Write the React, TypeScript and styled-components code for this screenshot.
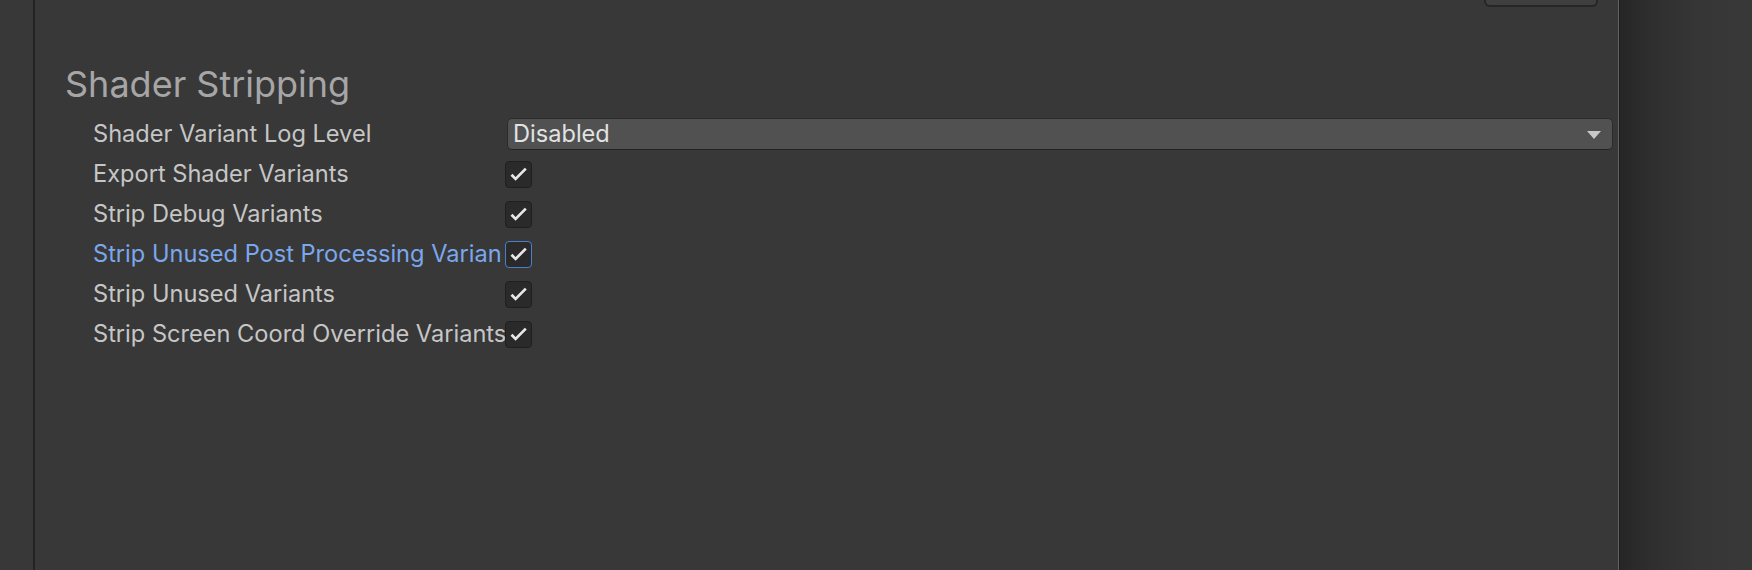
import styled, { createGlobalStyle } from "styled-components";

const GlobalStyle = createGlobalStyle`
  html, body {
    margin: 0;
    padding: 0;
    background: #383838;
  }
  body {
    font-family: Inter, "Noto Sans", "Liberation Sans", sans-serif;
  }
`;

type Setting = {
  label: string;
  checked: boolean;
  focused?: boolean;
};

const toggles: Setting[] = [
  { label: "Export Shader Variants", checked: true },
  { label: "Strip Debug Variants", checked: true },
  { label: "Strip Unused Post Processing Varian", checked: true, focused: true },
  { label: "Strip Unused Variants", checked: true },
  { label: "Strip Screen Coord Override Variants", checked: true },
];

const Page = styled.div`
  display: flex;
  width: 1752px;
  height: 570px;
  overflow: hidden;
  background: #383838;
`;

const Gutter = styled.div`
  width: 33px;
  background: #383838;
`;

const GutterLine = styled.div`
  width: 2px;
  background: #232323;
`;

const Panel = styled.div`
  flex: 1;
  display: flex;
  flex-direction: column;
  background: #383838;
`;

const TopBar = styled.div`
  display: flex;
  justify-content: flex-end;
  height: 7px;
  padding-right: 20px;
`;

const CutButton = styled.div`
  width: 110px;
  height: 5px;
  background: #3f3f3f;
  border: 2px solid #262626;
  border-top: none;
  border-radius: 0 0 6px 6px;
`;

const Section = styled.section`
  display: flex;
  flex-direction: column;
  padding: 55px 5px 0 30px;
`;

const Heading = styled.h2`
  margin: 0 0 8px;
  font-size: 36px;
  line-height: 44px;
  font-weight: 400;
  color: #a6a6a6;
`;

const Rows = styled.div`
  display: flex;
  flex-direction: column;
  padding-left: 28px;
`;

const Row = styled.div`
  display: flex;
  align-items: center;
  height: 40px;
`;

const Label = styled.div<{ $focused?: boolean }>`
  width: 412px;
  flex-shrink: 0;
  font-size: 23.6px;
  line-height: 40px;
  white-space: nowrap;
  color: ${(p) => (p.$focused ? "#7ba7ec" : "#c6c6c6")};
`;

const Dropdown = styled.div`
  flex: 1;
  margin-left: 2px;
  height: 32px;
  display: flex;
  align-items: center;
  justify-content: space-between;
  padding: 0 11px 2px 5px;
  box-sizing: border-box;
  background: #515151;
  border: 1px solid #2b2b2b;
  border-bottom-color: #232323;
  border-radius: 5px;
  font-size: 23.6px;
  color: #e2e2e2;
`;

const Arrow = styled.svg`
  width: 14px;
  height: 8px;
  margin-top: 3px;
`;

const Box = styled.div<{ $focused?: boolean }>`
  width: 25px;
  height: 25px;
  flex-shrink: 0;
  display: flex;
  align-items: center;
  justify-content: center;
  background: #2a2a2a;
  border: 1px solid ${(p) => (p.$focused ? "#4a80c9" : "#1f1f1f")};
  border-radius: 4px;
`;

const PanelEdge = styled.div`
  width: 0;
  border-left: 1px solid #626262;
  border-right: 1px solid #1e1e1e;
`;

const Shade = styled.div`
  width: 132px;
  background: linear-gradient(to right, #262626 0%, #2f2f2f 25%, #363636 60%, #383838 100%);
`;

const Check = () => (
  <svg width="25" height="25" viewBox="0 0 25 25">
    <polyline
      points="5.5,12.8 9.6,16.9 19.8,6.6"
      fill="none"
      stroke="#e8e8e8"
      strokeWidth="2.7"
      strokeLinejoin="miter"
    />
  </svg>
);

const CheckBox = ({ checked, focused }: { checked: boolean; focused?: boolean }) => (
  <Box $focused={focused}>{checked && <Check />}</Box>
);

export default function App() {
  return (
    <>
      <GlobalStyle />
      <Page>
        <Gutter />
        <GutterLine />
        <Panel>
          <TopBar>
            <CutButton />
          </TopBar>
          <Section>
            <Heading>Shader Stripping</Heading>
            <Rows>
              <Row>
                <Label>Shader Variant Log Level</Label>
                <Dropdown>
                  <span>Disabled</span>
                  <Arrow viewBox="0 0 14 8">
                    <polygon points="0,0 14,0 7,8" fill="#c8c8c8" />
                  </Arrow>
                </Dropdown>
              </Row>
              {toggles.map((t) => (
                <Row key={t.label}>
                  <Label $focused={t.focused}>{t.label}</Label>
                  <CheckBox checked={t.checked} focused={t.focused} />
                </Row>
              ))}
            </Rows>
          </Section>
        </Panel>
        <PanelEdge />
        <Shade />
      </Page>
    </>
  );
}
